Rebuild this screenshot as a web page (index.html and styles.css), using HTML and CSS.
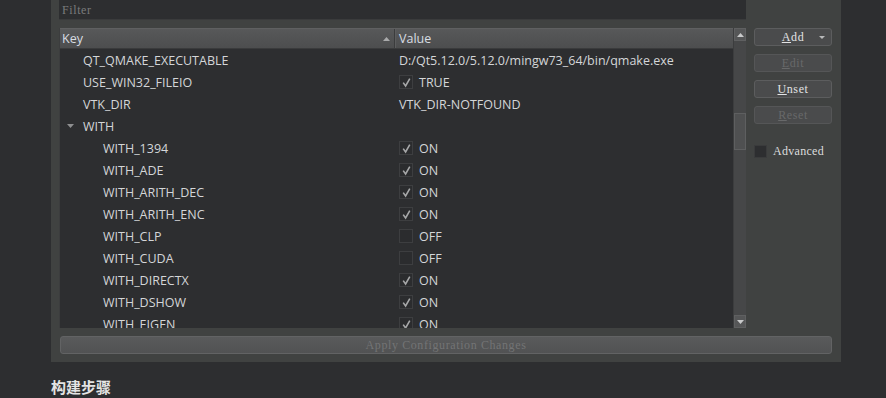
FILE: index.html
```html
<!DOCTYPE html>
<html lang="zh">
<head>
<meta charset="utf-8">
<title>CMake</title>
<link rel="stylesheet" href="styles.css">
</head>
<body>
<div class="panel">
  <div class="filter">Filter</div>
  <div class="main">
    <div class="tree">
      <div class="tree-body">
        <div class="header">
          <div class="hkey">Key
            <svg class="sort" width="7" height="4" viewBox="0 0 7 4"><path d="M0 4 L3.5 0 L7 4 Z" fill="#a9aaab"/></svg>
          </div>
          <div class="hval">Value</div>
        </div>
        <div class="rows">
          <div class="row"><div class="key k1">QT_QMAKE_EXECUTABLE</div><div class="val">D:/Qt5.12.0/5.12.0/mingw73_64/bin/qmake.exe</div></div>
          <div class="row"><div class="key k1">USE_WIN32_FILEIO</div><div class="val"><span class="cb on"><svg width="13" height="13" viewBox="0 0 13 13"><path d="M3.2 6.6 L5.6 10 L9.8 2.6" fill="none" stroke="#a7a8a9" stroke-width="1.6"/></svg></span>TRUE</div></div>
          <div class="row"><div class="key k1">VTK_DIR</div><div class="val">VTK_DIR-NOTFOUND</div></div>
          <div class="row"><div class="key k0"><svg class="exp" width="7" height="4" viewBox="0 0 7 4"><path d="M0 0 L7 0 L3.5 4 Z" fill="#8e8f90"/></svg>WITH</div><div class="val"></div></div>
          <div class="row"><div class="key k2">WITH_1394</div><div class="val"><span class="cb on"><svg width="13" height="13" viewBox="0 0 13 13"><path d="M3.2 6.6 L5.6 10 L9.8 2.6" fill="none" stroke="#a7a8a9" stroke-width="1.6"/></svg></span>ON</div></div>
          <div class="row"><div class="key k2">WITH_ADE</div><div class="val"><span class="cb on"><svg width="13" height="13" viewBox="0 0 13 13"><path d="M3.2 6.6 L5.6 10 L9.8 2.6" fill="none" stroke="#a7a8a9" stroke-width="1.6"/></svg></span>ON</div></div>
          <div class="row"><div class="key k2">WITH_ARITH_DEC</div><div class="val"><span class="cb on"><svg width="13" height="13" viewBox="0 0 13 13"><path d="M3.2 6.6 L5.6 10 L9.8 2.6" fill="none" stroke="#a7a8a9" stroke-width="1.6"/></svg></span>ON</div></div>
          <div class="row"><div class="key k2">WITH_ARITH_ENC</div><div class="val"><span class="cb on"><svg width="13" height="13" viewBox="0 0 13 13"><path d="M3.2 6.6 L5.6 10 L9.8 2.6" fill="none" stroke="#a7a8a9" stroke-width="1.6"/></svg></span>ON</div></div>
          <div class="row"><div class="key k2">WITH_CLP</div><div class="val"><span class="cb"></span>OFF</div></div>
          <div class="row"><div class="key k2">WITH_CUDA</div><div class="val"><span class="cb"></span>OFF</div></div>
          <div class="row"><div class="key k2">WITH_DIRECTX</div><div class="val"><span class="cb on"><svg width="13" height="13" viewBox="0 0 13 13"><path d="M3.2 6.6 L5.6 10 L9.8 2.6" fill="none" stroke="#a7a8a9" stroke-width="1.6"/></svg></span>ON</div></div>
          <div class="row"><div class="key k2">WITH_DSHOW</div><div class="val"><span class="cb on"><svg width="13" height="13" viewBox="0 0 13 13"><path d="M3.2 6.6 L5.6 10 L9.8 2.6" fill="none" stroke="#a7a8a9" stroke-width="1.6"/></svg></span>ON</div></div>
          <div class="row"><div class="key k2">WITH_EIGEN</div><div class="val"><span class="cb on"><svg width="13" height="13" viewBox="0 0 13 13"><path d="M3.2 6.6 L5.6 10 L9.8 2.6" fill="none" stroke="#a7a8a9" stroke-width="1.6"/></svg></span>ON</div></div>
        </div>
      </div>
      <div class="scrollbar">
        <div class="sbtn"><svg width="7" height="4" viewBox="0 0 7 4"><path d="M0 4 L3.5 0 L7 4 Z" fill="#c9cacb"/></svg></div>
        <div class="track">
          <div class="thumb"></div>
        </div>
        <div class="sbtn"><svg width="7" height="4" viewBox="0 0 7 4"><path d="M0 0 L7 0 L3.5 4 Z" fill="#c9cacb"/></svg></div>
      </div>
    </div>
    <div class="side">
      <button class="btn add"><span><u>A</u>dd</span><svg class="drop" width="6" height="3" viewBox="0 0 6 3"><path d="M0 0 L6 0 L3 3 Z" fill="#b8b9ba"/></svg></button>
      <button class="btn dis"><u>E</u>dit</button>
      <button class="btn"><u>U</u>nset</button>
      <button class="btn dis"><u>R</u>eset</button>
      <label class="adv"><span class="cb2"></span>Advanced</label>
    </div>
  </div>
  <button class="apply">Apply Configuration Changes</button>
</div>
<h2 class="title">构建步骤</h2>
</body>
</html>
```

FILE: styles.css
```css
* { box-sizing: border-box; }
html, body { margin: 0; padding: 0; }
body {
  background: #2d2e30;
  width: 886px;
  height: 398px;
  overflow: hidden;
  font-family: "Open Sans", "Noto Sans", "Noto Sans CJK SC", sans-serif;
}
.panel {
  margin-left: 51px;
  width: 790px;
  height: 362px;
  background: #404241;
  padding: 0 9px 0 8px;
  display: flex;
  flex-direction: column;
}
.filter {
  width: 687px;
  height: 20px;
  background: #2d2e30;
  border-bottom: 1px solid #3a3b3c;
  font-family: "Liberation Serif", serif;
  font-size: 12px;
  letter-spacing: 0.6px;
  color: #7a7b7c;
  padding-left: 3px;
  line-height: 21px;
}
.main {
  margin-top: 8px;
  display: flex;
  height: 300px;
}
.tree {
  width: 687px;
  height: 300px;
  display: flex;
  background: #2d2e30;
}
.tree-body {
  flex: 1;
  overflow: hidden;
  border-left: 1px solid #3c3d3e;
}
.header {
  display: flex;
  height: 21px;
  background: linear-gradient(#575859, #4d4e4f);
  border-top: 1px solid #5f6061;
  border-bottom: 1px solid #3a3b3c;
  color: #d8dde2;
  font-size: 12.5px;
}
.hkey {
  width: 335px;
  display: flex;
  align-items: center;
  justify-content: space-between;
  padding: 0 4px 0 2px;
  border-right: 1px solid #3b3c3d;
}
.hval {
  flex: 1;
  display: flex;
  align-items: center;
  padding-left: 3px;
  border-left: 1px solid #5c5d5e;
}
.sort { display: block; }
.rows {
  color: #d4d6d8;
  font-size: 12.5px;
}
.row {
  display: flex;
  height: 22px;
  align-items: center;
}
.key {
  width: 335px;
  display: flex;
  align-items: center;
  white-space: nowrap;
}
.k0 { padding-left: 7px; }
.k1 { padding-left: 23px; }
.k2 { padding-left: 43px; }
.exp { margin-right: 9px; display: block; }
.val {
  flex: 1;
  display: flex;
  align-items: center;
  padding-left: 4px;
  white-space: nowrap;
}
.cb {
  width: 14px;
  height: 14px;
  border: 1px solid #3d3e40;
  background: #2b2c2e;
  margin-right: 6px;
  display: block;
}
.cb svg { display: block; margin: -0.5px 0 0 -0.5px; }
.scrollbar {
  width: 13px;
  display: flex;
  flex-direction: column;
  background: #464748;
  border-left: 1px solid #3c3d3e;
}
.sbtn {
  height: 13px;
  background: #555657;
  border: 1px solid #5f6061;
  display: flex;
  align-items: center;
  justify-content: center;
}
.track {
  flex: 1;
  padding-top: 72px;
}
.thumb {
  height: 37px;
  background: #4f5051;
  border: 1px solid #5e5f60;
}
.side {
  margin-left: 8px;
  width: 78px;
  display: flex;
  flex-direction: column;
  gap: 8px;
}
.btn {
  height: 18px;
  width: 78px;
  background: #4a4b4c;
  border: 1px solid #5c5d5e;
  border-radius: 3px;
  color: #e2e3e4;
  font-family: "Liberation Serif", serif;
  font-size: 12px;
  letter-spacing: 0.6px;
  padding: 0;
  display: flex;
  align-items: center;
  justify-content: center;
  position: relative;
}
.btn u { text-underline-offset: 1px; }
.btn.dis { color: #68696a; border-color: #555657; }
.add .drop { position: absolute; right: 6px; top: 7px; }
.adv {
  margin-top: 12px;
  display: flex;
  align-items: center;
  font-family: "Liberation Serif", serif;
  font-size: 12px;
  letter-spacing: 0.3px;
  color: #dcdddd;
}
.cb2 {
  width: 13px;
  height: 13px;
  background: #2d2e30;
  border: 1px solid #3a3b3c;
  margin-right: 6px;
  display: block;
}
.apply {
  margin-top: 8px;
  width: 772px;
  height: 18px;
  background: linear-gradient(#595a5b, #515253);
  border: 1px solid #626364;
  border-radius: 3px;
  color: #737475;
  font-family: "Liberation Serif", serif;
  font-size: 12px;
  letter-spacing: 0.6px;
  padding: 0;
  margin-left: 1px;
}
.title {
  margin: 15px 0 0 51px;
  font-family: "Noto Sans CJK SC", sans-serif;
  font-size: 15px;
  font-weight: bold;
  color: #e4e4e4;
  line-height: 20px;
}
```
